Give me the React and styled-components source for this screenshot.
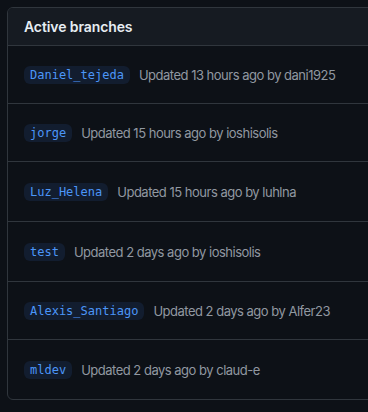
import styled, { createGlobalStyle } from "styled-components";

const GlobalStyle = createGlobalStyle`
  html, body {
    margin: 0;
    padding: 0;
    background: #0d1117;
    overflow: hidden;
  }
`;

const Page = styled.div`
  padding: 7px 0 0 7px;
  width: 368px;
  height: 412px;
  box-sizing: border-box;
  overflow: hidden;
  font-family: Inter, "Liberation Sans", sans-serif;
`;

const Box = styled.div`
  width: 420px;
  border: 1px solid #30363d;
  border-radius: 6px;
  background: #0d1117;
  overflow: hidden;
`;

const Header = styled.div`
  height: 37px;
  display: flex;
  align-items: center;
  padding-left: 16px;
  background: #161b22;
  border-bottom: 1px solid #30363d;
`;

const Title = styled.h3`
  margin: 0;
  font-size: 14px;
  font-weight: 600;
  letter-spacing: -0.1px;
  color: #e6edf3;
`;

const Row = styled.div`
  height: ${(p) => p.$h}px;
  display: flex;
  align-items: center;
  gap: 9px;
  padding-left: 16px;
  border-top: ${(p) => (p.$first ? "none" : "1px solid #30363d")};
`;

const Branch = styled.span`
  height: 18px;
  display: inline-flex;
  align-items: center;
  padding: 0 6px;
  border-radius: 6px;
  background: #121d2f;
  color: #4c96f8;
  font-family: "DejaVu Sans Mono", "Liberation Mono", monospace;
  font-size: 12px;
`;

const Meta = styled.span`
  font-size: 13px;
  letter-spacing: -0.5px;
  color: #9198a1;
`;

const branches = [
  { name: "Daniel_tejeda", when: "13 hours ago", by: "dani1925", h: 57 },
  { name: "jorge", when: "15 hours ago", by: "ioshisolis", h: 57 },
  { name: "Luz_Helena", when: "15 hours ago", by: "luhlna", h: 59 },
  { name: "test", when: "2 days ago", by: "ioshisolis", h: 59 },
  { name: "Alexis_Santiago", when: "2 days ago", by: "Alfer23", h: 57 },
  { name: "mldev", when: "2 days ago", by: "claud-e", h: 59 },
];

export default function App() {
  return (
    <>
      <GlobalStyle />
      <Page>
        <Box>
          <Header>
            <Title>Active branches</Title>
          </Header>
          {branches.map((b, i) => (
            <Row key={b.name} $first={i === 0} $h={b.h}>
              <Branch>{b.name}</Branch>
              <Meta>
                Updated {b.when} by {b.by}
              </Meta>
            </Row>
          ))}
        </Box>
      </Page>
    </>
  );
}
